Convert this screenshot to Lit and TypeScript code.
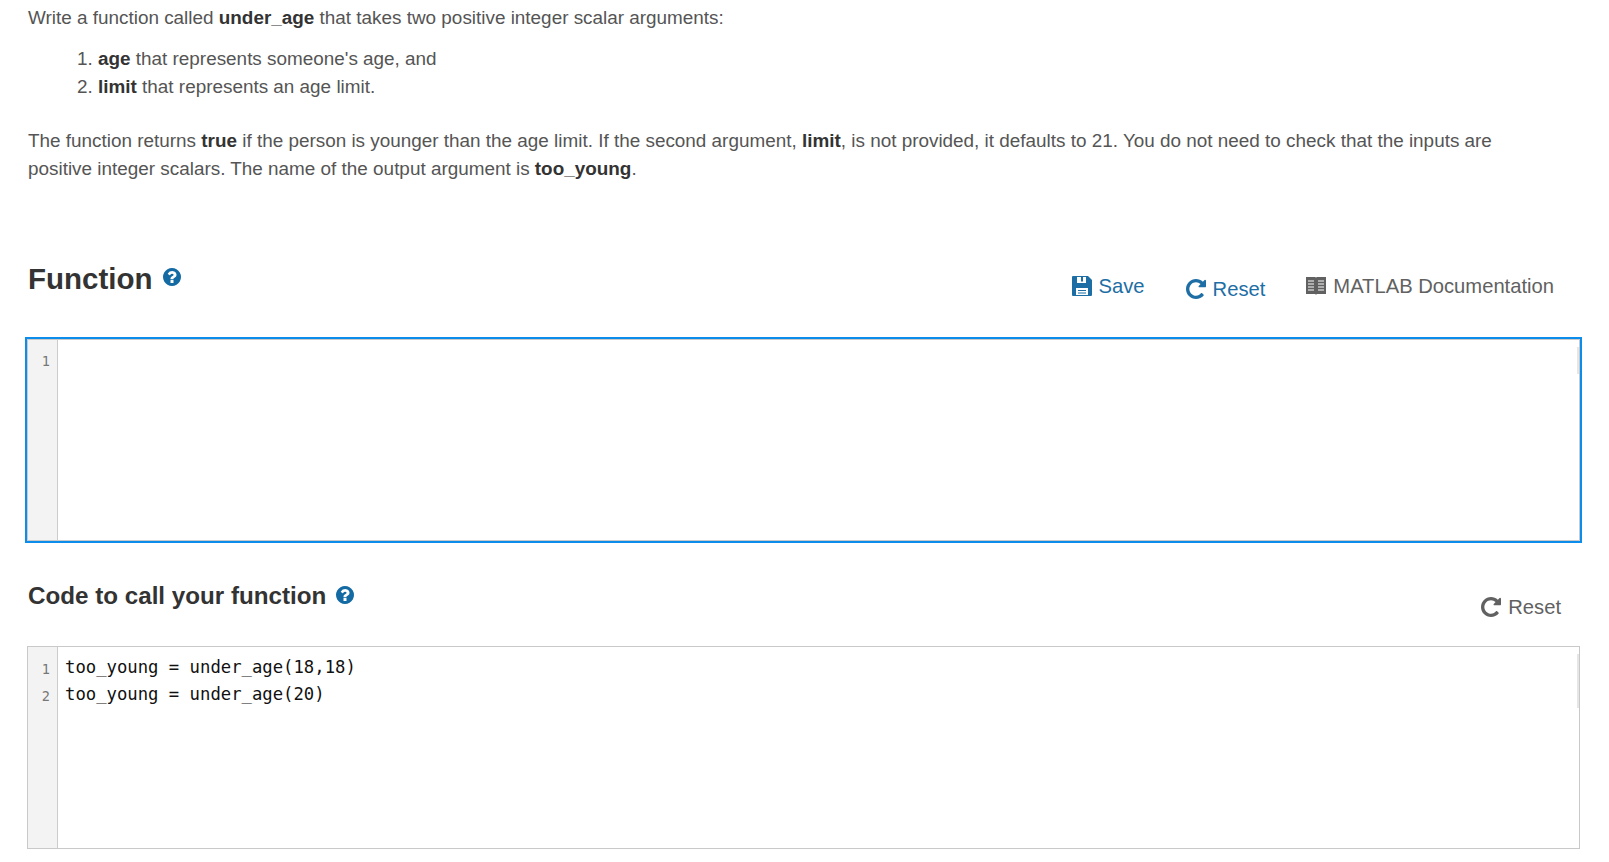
import { LitElement, html, css, svg } from "lit";
import { customElement } from "lit/decorators.js";

const redo = svg`<path d="M1664 256v448q0 26-19 45t-45 19h-448q-42 0-59-40-17-39 14-69l138-138q-148-137-349-137-104 0-198.5 40.5t-163.5 109.5-109.5 163.5-40.5 198.5 40.5 198.5 109.5 163.5 163.5 109.5 198.5 40.5q119 0 225-52t179-147q7-10 23-12 15 0 25 9l137 138q9 8 9.5 20.5t-7.5 22.5q-109 132-264 204.5t-327 72.5q-156 0-298-61t-245-164-164-245-61-298 61-298 164-245 245-164 298-61q147 0 284.5 55.5t244.5 156.5l130-129q29-31 70-14 39 17 39 59z"/>`;
const help = html`<svg class="help" viewBox="128 128 1536 1536" fill="currentColor"><path d="M1024 1376v-192q0-14-9-23t-23-9h-192q-14 0-23 9t-9 23v192q0 14 9 23t23 9h192q14 0 23-9t9-23zm256-672q0-88-55.5-163t-138.5-116-170-41q-243 0-371 213-15 24 8 42l132 100q7 6 19 6 16 0 25-12 53-68 86-92 34-24 86-24 48 0 85.5 26t37.5 59q0 38-20 61t-68 45q-63 28-115.5 86.5t-52.5 125.5v36q0 14 9 23t23 9h192q14 0 23-9t9-23q0-19 21.5-49.5t54.5-49.5q32-18 49-28.5t46-35 44.5-48 28-60.5 12.5-81zm384 192q0 209-103 385.5t-279.5 279.5-385.5 103-385.5-103-279.5-279.5-103-385.5 103-385.5 279.5-279.5 385.5-103 385.5 103 279.5 279.5 103 385.5z"/></svg>`;

@customElement("app-root")
export class AppRoot extends LitElement {
  static styles = css`
    :host { display: block; background: #fff; font-family: "Liberation Sans", Arial, sans-serif; color: #555; font-size: 18.9px; line-height: 28px; height: 862px; overflow: hidden; }
    .page { padding: 4px 29px 0 28px; }
    p { margin: 0; }
    .wide { max-width: 1500px; }
    b { color: #333; font-weight: 700; }
    ol { margin: 13px 0 26px; padding: 0 0 0 70px; }
    .head { display: flex; justify-content: space-between; align-items: flex-start; }
    .fn-head { margin-top: 74px; height: 80px; }
    h2, h3 { margin: 0; color: #333; font-weight: 700; display: flex; align-items: flex-start; }
    h2 { font-size: 29.5px; line-height: 34px; padding-top: 5px; gap: 10px; }
    h3 { font-size: 24.2px; line-height: 30px; gap: 10px; padding-top: 3px; }
    .help { width: 18px; height: 18px; color: #146ba3; }
    h2 .help { margin-top: 6px; }
    h3 .help { margin-top: 5px; }
    .tools { display: flex; gap: 41px; font-size: 20.2px; line-height: 24px; padding-right: 26px; padding-top: 14px; }
    .tool { display: flex; align-items: center; gap: 7px; color: #616161; }
    .tool.blue { color: #1d6ea5; }
    .tool.low { margin-top: 6px; }
    .tool svg { width: 20px; height: 20px; flex: none; }
    .fn-edit { margin: 0 -2px 0 -3px; height: 206px; box-sizing: border-box; border: 2px solid #0d8deb; }
    .editor { display: flex; height: 100%; box-sizing: border-box; border: 1px solid #c9c9c9; background: #fff; }
    .gutter { width: 22px; background: #f3f3f3; border-right: 1px solid #ccc; flex: none; font-family: "DejaVu Sans Mono", monospace; font-size: 13.6px; color: #777; text-align: right; padding: 9px 7px 0 0; line-height: 27px; }
    .gutter div { height: 27px; }
    .fn-edit .gutter { padding-top: 8px; }
    .code { position: relative; flex: 1; font-family: "DejaVu Sans Mono", monospace; font-size: 17.25px; line-height: 27px; color: #111; padding: 7px 0 0 7px; white-space: pre; }
    .thumb { position: absolute; top: 7px; right: 0; width: 2px; background: #e6e6e6; }
    .call-head { margin-top: 35px; height: 68px; }
    .call-head .tools { padding-right: 19px; padding-top: 17px; }
    .call-edit { height: 203px; margin-left: -1px; margin-right: 0; }
  `;

  private thumb(lines: number) {
    return html`<span class="thumb" style="height:${lines * 27}px"></span>`;
  }

  render() {
    return html`<div class="page">
      <p>Write a function called <b>under_age</b> that takes two positive integer scalar arguments:</p>
      <ol>
        <li><b>age</b> that represents someone's age, and</li>
        <li><b>limit</b> that represents an age limit.</li>
      </ol>
      <p class="wide">The function returns <b>true</b> if the person is younger than the age limit. If the second argument, <b>limit</b>, is not provided, it defaults to 21. You do not need to check that the inputs are positive integer scalars. The name of the output argument is <b>too_young</b>.</p>

      <div class="head fn-head">
        <h2>Function ${help}</h2>
        <div class="tools">
          <span class="tool blue">
            <svg viewBox="0 0 20 20" fill="currentColor"><path fill-rule="evenodd" d="M1 0h15l4 4v15a1 1 0 0 1-1 1H1a1 1 0 0 1-1-1V1a1 1 0 0 1 1-1zM5 1v6h9V1h-3v4.500H9V1zM4 12v7h12v-7zM6 14h8v1H6zM6 16.500h8v1H6z"/></svg>
            Save
          </span>
          <span class="tool blue low"><svg viewBox="128 128 1536 1536" fill="currentColor">${redo}</svg>Reset</span>
          <span class="tool">
            <svg viewBox="0 0 20 20" fill="currentColor"><path fill-rule="evenodd" d="M0 1h9.300l.7 .8.7-.8H20v17h-9.300l-.7 1-.7-1H0zM2 4.500v1h6v-1zM2 7.500v1h6v-1zM2 10.500v1h6v-1zM2 13.500v1h6v-1zM12 4.500v1h6v-1zM12 7.500v1h6v-1zM12 10.500v1h6v-1zM12 13.500v1h6v-1z"/></svg>
            MATLAB Documentation
          </span>
        </div>
      </div>
      <div class="fn-edit"><div class="editor"><div class="gutter"><div>1</div></div><div class="code">${this.thumb(1)}</div></div></div>

      <div class="head call-head">
        <h3>Code to call your function ${help}</h3>
        <div class="tools"><span class="tool"><svg viewBox="128 128 1536 1536" fill="currentColor">${redo}</svg>Reset</span></div>
      </div>
      <div class="call-edit"><div class="editor"><div class="gutter"><div>1</div><div>2</div></div><div class="code">too_young = under_age(18,18)
too_young = under_age(20)${this.thumb(2)}</div></div></div>
    </div>`;
  }
}
